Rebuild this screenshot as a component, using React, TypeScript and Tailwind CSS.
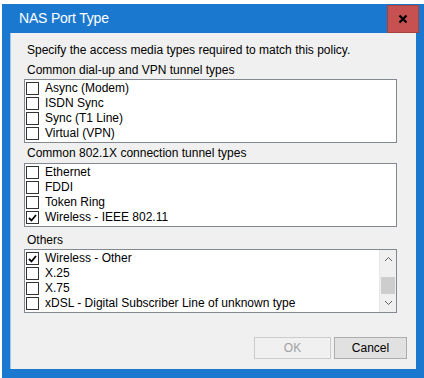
import React from "react";

const font = { fontFamily: '"Liberation Sans", Arial, sans-serif' };

function Check({ checked }: { checked?: boolean }) {
  return (
    <span className="w-[13px] h-[13px] border border-[#333333] bg-white flex items-center justify-center shrink-0">
      {checked && (
        <svg width="9" height="8" viewBox="0 0 9 8">
          <path d="M1 4 L3.5 6.5 L8 1" fill="none" stroke="#000" strokeWidth="1.8" />
        </svg>
      )}
    </span>
  );
}

function Row({ label, checked }: { label: string; checked?: boolean }) {
  return (
    <div className="h-[15px] flex items-center gap-[6px] whitespace-nowrap">
      <Check checked={checked} />
      <span>{label}</span>
    </div>
  );
}

function ListBox({ items, scroll }: { items: { label: string; checked?: boolean }[]; scroll?: boolean }) {
  return (
    <div className="w-[373px] h-[64px] border border-[#828790] bg-white flex">
      <div className="flex-1 p-px overflow-hidden">
        {items.map((it) => (
          <Row key={it.label} label={it.label} checked={it.checked} />
        ))}
      </div>
      {scroll && (
        <div className="w-[17px] bg-[#f0f0f0] flex flex-col border-l border-[#e6e6e6]">
          <div className="h-[17px] flex items-center justify-center">
            <svg width="9" height="6" viewBox="0 0 9 6">
              <path d="M1 5 L4.5 1.5 L8 5" fill="none" stroke="#606060" strokeWidth="1" />
            </svg>
          </div>
          <div className="h-[10px]" />
          <div className="h-[17px] mx-px bg-[#cdcdcd]" />
          <div className="flex-1 flex items-center justify-center">
            <svg width="9" height="6" viewBox="0 0 9 6">
              <path d="M1 1 L4.5 4.5 L8 1" fill="none" stroke="#606060" strokeWidth="1" />
            </svg>
          </div>
        </div>
      )}
    </div>
  );
}

export default function App() {
  return (
    <div className="w-[424px] h-[378px] bg-white overflow-hidden text-[12px] leading-[15px] text-black" style={font}>
      <div className="h-[4px]" />
      <div className="ml-[2px] w-[422px] h-[374px] bg-[#1b78cf] flex flex-col">
        <div className="h-[29px] flex items-center justify-between">
          <span className="ml-[17px] text-[14px] tracking-[-0.2px] text-white">NAS Port Type</span>
          <div className="w-[32px] h-[28px] mr-[5px] bg-[#c75050] border border-[#a94040] flex items-center justify-center">
            <svg width="10" height="10" viewBox="0 0 10 10">
              <path d="M1.5 1.5 L8.5 8.5 M8.5 1.5 L1.5 8.5" stroke="#000" strokeWidth="2.2" />
            </svg>
          </div>
        </div>
        <div className="ml-[8px] w-[406px] h-[336px] bg-[#f0f0f0] border-l border-[#9ec6ee] flex flex-col pl-[13px]">
          <div className="mt-[10px] ml-[3px]">Specify the access media types required to match this policy.</div>
          <div className="mt-[5px] ml-[3px]">Common dial-up and VPN tunnel types</div>
          <div className="mt-px">
            <ListBox
              items={[
                { label: "Async (Modem)" },
                { label: "ISDN Sync" },
                { label: "Sync (T1 Line)" },
                { label: "Virtual (VPN)" },
              ]}
            />
          </div>
          <div className="mt-[3px] ml-[3px]">Common 802.1X connection tunnel types</div>
          <div className="mt-[2px]">
            <ListBox
              items={[
                { label: "Ethernet" },
                { label: "FDDI" },
                { label: "Token Ring" },
                { label: "Wireless - IEEE 802.11", checked: true },
              ]}
            />
          </div>
          <div className="mt-[6px] ml-[3px]">Others</div>
          <div className="mt-px">
            <ListBox
              scroll
              items={[
                { label: "Wireless - Other", checked: true },
                { label: "X.25" },
                { label: "X.75" },
                { label: "xDSL - Digital Subscriber Line of unknown type" },
              ]}
            />
          </div>
          <div className="mt-[24px] flex justify-end gap-[3px] pr-[9px]">
            <div className="w-[77px] h-[22px] border border-[#cccccc] bg-[#f0f0f0] text-[#a0a0a0] flex items-center justify-center">
              OK
            </div>
            <div className="w-[73px] h-[22px] border border-[#adadad] bg-[#e1e1e1] flex items-center justify-center">
              Cancel
            </div>
          </div>
        </div>
      </div>
    </div>
  );
}
